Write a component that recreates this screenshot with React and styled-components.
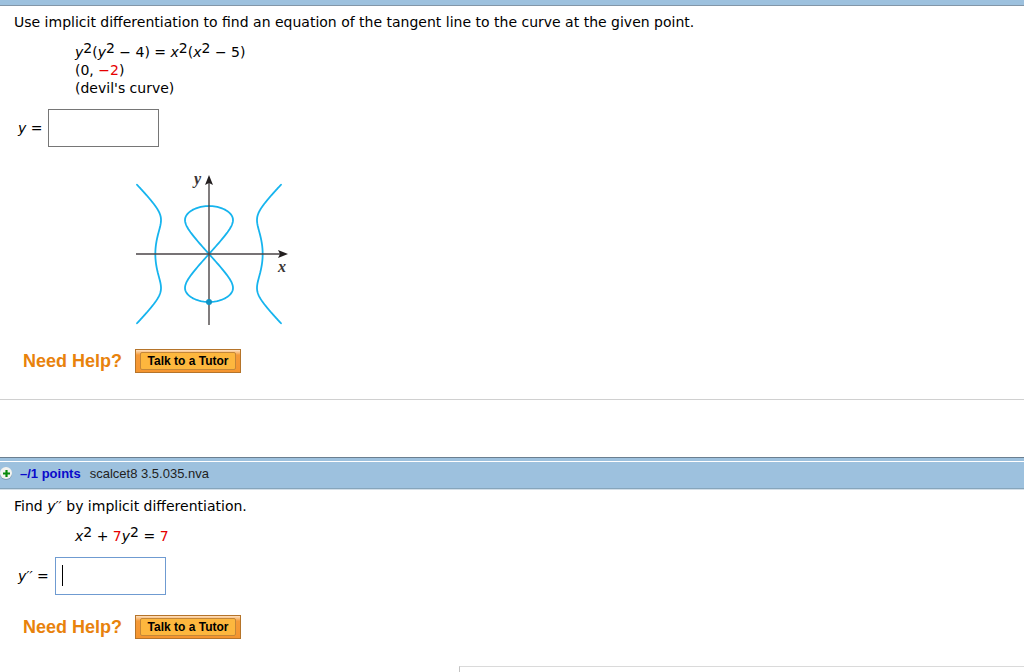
import React from "react";
import styled, { createGlobalStyle } from "styled-components";

const GlobalStyle = createGlobalStyle`
  * {
    box-sizing: border-box;
  }
  body {
    margin: 0;
    background: white;
    color: black;
    font-family: "DejaVu Sans", Verdana, sans-serif;
    font-size: 14px;
    line-height: 18px;
  }
`;

const Page = styled.main`
  min-height: 100vh;
  display: flex;
  flex-direction: column;
  overflow: hidden;
`;
const TopBar = styled.div`
  height: 6px;
  background: #9dc1de;
  border-bottom: 1px solid #8296a8;
`;
const Question = styled.section`
  padding: 7px 14px 0;
`;
const Prompt = styled.p`
  margin: 0;
`;
const Equations = styled.div`
  margin: 12px 0 0 61px;
`;
const Line = styled.div``;
const Sup = styled.sup`
  font-size: 14px;
  line-height: 0;
  vertical-align: 4px;
`;
const Random = styled.span`
  color: #e60000;
`;
const AnswerRow = styled.div`
  display: flex;
  align-items: center;
  gap: 6px;
  margin: 12px 0 0 4px;
`;
const AnswerBox = styled.div`
  position: relative;
`;
const AnswerInput = styled.input`
  display: block;
  width: 111px;
  height: 38px;
  padding: 0 6px;
  border: 1px solid ${props => (props.$active ? "#6f9bd1" : "#767676")};
  background: white;
  font: inherit;
  outline: none;
`;
const Caret = styled.span`
  position: absolute;
  left: 7px;
  top: 8px;
  width: 1px;
  height: 21px;
  background: black;
`;
const Graph = styled.svg`
  display: block;
  margin: 23px 0 0 122px;
`;
const HelpRow = styled.div`
  display: flex;
  align-items: center;
  gap: 13px;
  margin: ${props => (props.$compact ? "20px" : "21px")} 0 0 9px;
`;
const HelpLabel = styled.span`
  color: #e8820c;
  font: bold 18px/24px "Liberation Sans", Arial, sans-serif;
`;
const TutorButton = styled.button`
  width: 106px;
  height: 24px;
  padding: 2px 4px;
  border: 1px solid #b5742a;
  background: linear-gradient(#fde0c0, #f59a38 5px, #f5952f);
`;
const TutorFace = styled.span`
  display: block;
  border: 1px solid #c48738;
  border-radius: 2px;
  background: #fdb73e;
  color: black;
  font: bold 12px/16px "Liberation Sans", Arial, sans-serif;
  white-space: nowrap;
`;
const Divider = styled.hr`
  width: 100%;
  height: 1px;
  margin: 26px 0 57px;
  border: 0;
  background: #d0d0d0;
`;
const QuestionHeader = styled.header`
  border-top: 1px solid #6b7f90;
  border-bottom: 1px solid #d3dfe8;
  background: #9dc1de;
`;
const HeaderStripe = styled.div`
  height: 4px;
  border-bottom: 1px solid white;
`;
const HeaderRow = styled.div`
  display: flex;
  align-items: center;
  height: 27px;
  padding-bottom: 3px;
  border-bottom: 1px solid #86a5bb;
  font: 13px/16px "Liberation Sans", Arial, sans-serif;
`;
const ExpandButton = styled.button`
  width: 13px;
  height: 13px;
  padding: 0;
  border: 0;
  background: none;
`;
const Points = styled.b`
  margin: 0 9px 0 7px;
  color: #0a0acb;
`;
const Source = styled.span`
  color: #222;
`;
const NextPanel = styled.div`
  flex: 1;
  width: calc(100% - 459px);
  min-height: 6px;
  margin: 27px 0 0 auto;
  border-top: 1px solid #dadada;
  border-left: 1px solid #c4c4c4;
`;

// y^2(y^2 - 4) = x^2(x^2 - 5), solved for x
const UNIT = 24;
const CX = 73;
const CY = 80;

function solveX(y, side) {
  const root = Math.sqrt(25 + 4 * y * y * (y * y - 4));
  return Math.sqrt(Math.max(0, (5 + side * root) / 2));
}

function toPath(points) {
  return (
    "M" +
    points
      .map(([x, y]) => `${(CX + x * UNIT).toFixed(2)} ${(CY - y * UNIT).toFixed(2)}`)
      .join("L")
  );
}

const steps = [...Array(161)].map((x, i) => i / 160);
const loops = steps.map(s => {
  const t = s * 2 * Math.PI;
  const y = 2 * Math.sin(t);
  return [Math.sign(Math.cos(t)) * solveX(y, -1), y];
});
const branch = steps.map(s => {
  const y = (s * 2 - 1) * 2.885;
  return [solveX(y, 1), y];
});
const mirrored = branch.map(([x, y]) => [-x, y]);

function DevilsCurve() {
  return (
    <Graph width="154" height="158" viewBox="0 -4 154 158" role="img" aria-label="Devil's curve">
      <g fill="none" stroke="#16b4ee" strokeWidth="1.8" strokeLinecap="round">
        <path d={toPath(loops)} />
        <path d={toPath(branch)} />
        <path d={toPath(mirrored)} />
      </g>
      <path d="M0 80H145M73 151V8" stroke="#4b4648" strokeWidth="1.4" />
      <path d="M152 80L142 76L144 80L142 84Z" fill="#231f20" />
      <path d="M73 1L69 11L73 9L77 11Z" fill="#231f20" />
      <circle cx="73" cy="128" r="3" fill="#1093c4" />
      <g fill="#3a3637" fontFamily="Liberation Serif, serif" fontStyle="italic" fontWeight="bold" fontSize="16">
        <text x="58" y="10">y</text>
        <text x="142" y="98">x</text>
      </g>
    </Graph>
  );
}

function NeedHelp({ compact }) {
  return (
    <HelpRow $compact={compact}>
      <HelpLabel>Need Help?</HelpLabel>
      <TutorButton type="button">
        <TutorFace>Talk to a Tutor</TutorFace>
      </TutorButton>
    </HelpRow>
  );
}

function App() {
  return (
    <Page>
      <GlobalStyle />
      <TopBar />
      <Question>
        <Prompt>
          Use implicit differentiation to find an equation of the tangent line
          to the curve at the given point.
        </Prompt>
        <Equations>
          <Line>
            <i>y</i>
            <Sup>2</Sup>(<i>y</i>
            <Sup>2</Sup> − 4) = <i>x</i>
            <Sup>2</Sup>(<i>x</i>
            <Sup>2</Sup> − 5)
          </Line>
          <Line>
            (0, <Random>−2</Random>)
          </Line>
          <Line>(devil's curve)</Line>
        </Equations>
        <AnswerRow>
          <label htmlFor="tangent">
            <i>y</i> =
          </label>
          <AnswerInput id="tangent" type="text" />
        </AnswerRow>
        <DevilsCurve />
        <NeedHelp />
      </Question>
      <Divider />
      <QuestionHeader>
        <HeaderStripe />
        <HeaderRow>
          <ExpandButton type="button" aria-label="Expand">
            <svg width="13" height="13" viewBox="0 0 13 13" display="block">
              <circle cx="6" cy="7" r="6" fill="#7f9cb3" />
              <circle cx="6" cy="6" r="6" fill="#f4f4f0" />
              <path d="M6.500 3V10M3 6.500H10" stroke="#0a8a0a" strokeWidth="2.200" />
            </svg>
          </ExpandButton>
          <Points>–/1 points</Points>
          <Source>scalcet8 3.5.035.nva</Source>
        </HeaderRow>
      </QuestionHeader>
      <Question>
        <Prompt>
          Find <i>y′′</i> by implicit differentiation.
        </Prompt>
        <Equations>
          <Line>
            <i>x</i>
            <Sup>2</Sup> + <Random>7</Random>
            <i>y</i>
            <Sup>2</Sup> = <Random>7</Random>
          </Line>
        </Equations>
        <AnswerRow>
          <label htmlFor="second">
            <i>y′′</i> =
          </label>
          <AnswerBox>
            <AnswerInput id="second" type="text" $active />
            <Caret />
          </AnswerBox>
        </AnswerRow>
        <NeedHelp compact />
      </Question>
      <NextPanel />
    </Page>
  );
}

export default App;
